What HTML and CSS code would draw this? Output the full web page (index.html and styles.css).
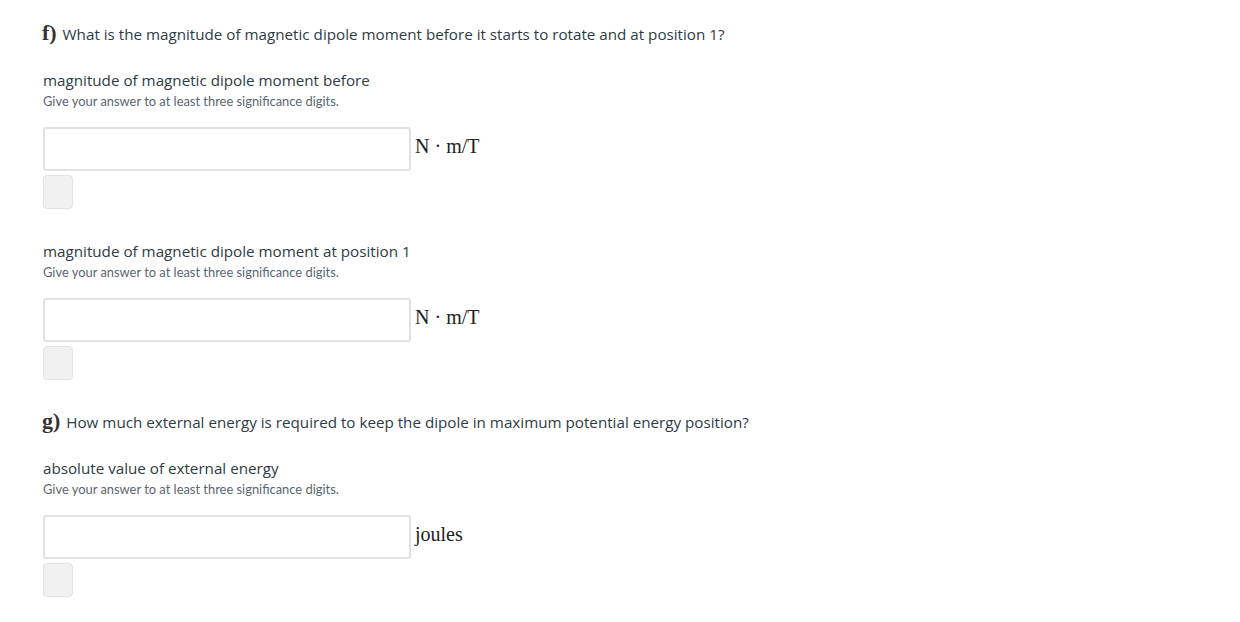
FILE: index.html
```html
<!DOCTYPE html>
<html lang="en">
<head>
<meta charset="utf-8">
<title>Question parts</title>
<link rel="stylesheet" href="styles.css">
</head>
<body>
<main class="page">
  <section class="part">
    <h2 class="part-title"><span class="part-letter">f)</span> What is the magnitude of magnetic dipole moment before it starts to rotate and at position 1?</h2>
    <div class="field">
      <div class="field-label">magnitude of magnetic dipole moment before</div>
      <div class="field-hint">Give your answer to at least three significance digits.</div>
      <div class="answer-row">
        <input class="answer-input" type="text" aria-label="magnitude of magnetic dipole moment before">
        <span class="unit">N<span class="dot">·</span>m/T</span>
      </div>
      <button class="check-btn" type="button" aria-label="check"></button>
    </div>
    <div class="field">
      <div class="field-label">magnitude of magnetic dipole moment at position 1</div>
      <div class="field-hint">Give your answer to at least three significance digits.</div>
      <div class="answer-row">
        <input class="answer-input" type="text" aria-label="magnitude of magnetic dipole moment at position 1">
        <span class="unit">N<span class="dot">·</span>m/T</span>
      </div>
      <button class="check-btn" type="button" aria-label="check"></button>
    </div>
  </section>
  <section class="part">
    <h2 class="part-title"><span class="part-letter">g)</span> How much external energy is required to keep the dipole in maximum potential energy position?</h2>
    <div class="field">
      <div class="field-label">absolute value of external energy</div>
      <div class="field-hint">Give your answer to at least three significance digits.</div>
      <div class="answer-row">
        <input class="answer-input" type="text" aria-label="absolute value of external energy">
        <span class="unit">joules</span>
      </div>
      <button class="check-btn" type="button" aria-label="check"></button>
    </div>
  </section>
</main>
</body>
</html>
```
FILE: styles.css
```css
html, body {
  margin: 0;
  padding: 0;
  background: #ffffff;
}
body {
  font-family: "Open Sans", "Liberation Sans", sans-serif;
  color: #2d3b45;
}
.page {
  padding: 23px 0 0 43px;
}
.part {
  margin-bottom: 31px;
}
.part-title {
  margin: 0 0 26px 0;
  font-size: 15.2px;
  font-weight: 400;
  line-height: 20px;
  color: #2d3b45;
}
.part-letter {
  font-family: "Liberation Serif", "Times New Roman", serif;
  font-weight: 700;
  font-size: 22px;
  color: #333333;
  margin-left: -1px;
  margin-right: 2px;
}
.field {
  margin-bottom: 32px;
}
.field:last-child {
  margin-bottom: 0;
}
.field-label {
  font-size: 15.2px;
  line-height: 20px;
  color: #2d3b45;
  margin-bottom: 3px;
}
.field-hint {
  font-family: "Lato", "Open Sans", sans-serif;
  font-size: 12.9px;
  line-height: 16px;
  color: #5a6570;
  margin-bottom: 18px;
}
.answer-row {
  display: flex;
  align-items: center;
  gap: 4px;
}
.answer-input {
  box-sizing: border-box;
  width: 368px;
  height: 44px;
  margin: 0;
  border: 2px solid #e2e2e2;
  border-radius: 3px;
  background: #ffffff;
  padding: 0 8px;
  font-size: 14px;
}
.unit {
  font-family: "Liberation Serif", "Times New Roman", serif;
  font-size: 20px;
  color: #222222;
  margin-top: -5px;
}
.dot {
  margin: 0 5px;
}
.check-btn {
  display: block;
  box-sizing: border-box;
  width: 30px;
  height: 34px;
  margin: 4px 0 0 0;
  padding: 0;
  border: 1px solid #e3e3e3;
  border-radius: 4px;
  background: #f1f1f1;
}
```
